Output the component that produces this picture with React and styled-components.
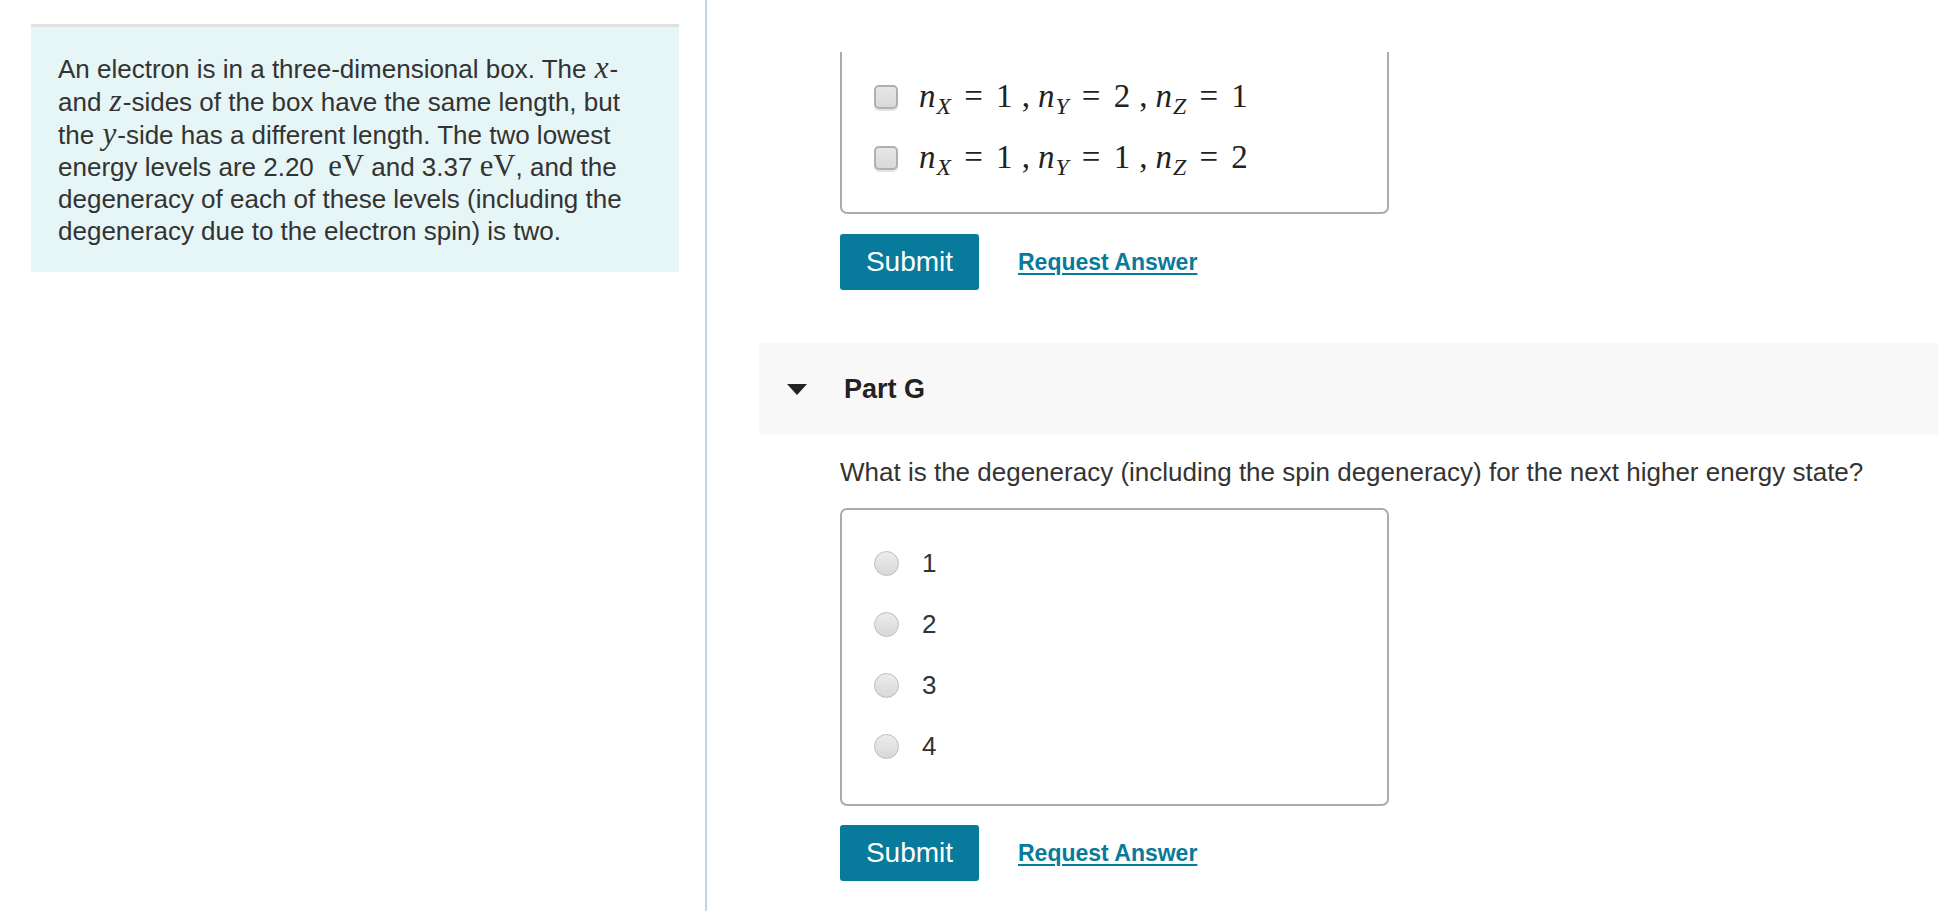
import React from 'react';
import styled, { createGlobalStyle } from 'styled-components';

const GlobalStyle = createGlobalStyle`
	html, body {
		margin: 0;
		padding: 0;
		background: #fff;
	}
	body {
		font-family: "Liberation Sans", Arial, sans-serif;
		color: #333;
	}
`;

const Page = styled.div`
	display: flex;
	height: 100vh;
	overflow: hidden;
`;

const LeftPane = styled.div`
	box-sizing: border-box;
	width: 707px;
	flex-shrink: 0;
	padding: 24px 26px 0 31px;
	border-right: 2px solid #c7d5e0;
`;

const IntroBox = styled.div`
	background: #e6f5f6;
	border-top: 3px solid #e1e1e1;
	padding: 25px 22px 25px 27px;
	font-size: 26px;
	line-height: 32px;
	color: #333;
`;

const MathVar = styled.span`
	font-family: "Liberation Serif", "Times New Roman", serif;
	font-style: italic;
	font-size: 1.2em;
	line-height: 1;
	margin: 0 1px;
`;

const MathRoman = styled.span`
	font-family: "Liberation Serif", "Times New Roman", serif;
	font-size: 1.18em;
	line-height: 1;
`;

const RightPane = styled.div`
	flex: 1;
	padding-top: 52px;
	overflow: hidden;
`;

const Section = styled.div`
	margin-left: 133px;
	width: 549px;
`;

const ChoiceBox = styled.div`
	box-sizing: border-box;
	width: 549px;
	border: 2px solid #ababab;
	border-top: ${({ cut }) => (cut ? 'none' : '2px solid #ababab')};
	border-radius: ${({ cut }) => (cut ? '0 0 7px 7px' : '7px')};
	padding: ${({ cut }) => (cut ? '14px 0 24px 32px' : '23px 0 27px 32px')};
`;

const ChoiceRow = styled.label`
	display: flex;
	align-items: center;
	height: 61px;
	gap: ${({ gap }) => gap || 22}px;
	cursor: pointer;
`;

const CheckMark = styled.span`
	box-sizing: border-box;
	width: 24px;
	height: 24px;
	border-radius: 5px;
	border: 2px solid #b0b0b0;
	background: linear-gradient(#e6e6e6, #d9d9d9);
	box-shadow: 0 2px 0 #e4e4e4;
	flex-shrink: 0;
`;

const RadioMark = styled.span`
	box-sizing: border-box;
	width: 25px;
	height: 25px;
	border-radius: 50%;
	border: 1.5px solid #bdbdbd;
	background: linear-gradient(#ececec, #d8d8d8);
	flex-shrink: 0;
`;

const MathLine = styled.span`
	font-family: "Liberation Serif", "Times New Roman", serif;
	font-size: 33px;
	color: #222;
	display: inline-flex;
	align-items: baseline;
	white-space: nowrap;
`;

const N = styled.span`
	font-style: italic;
`;

const Sub = styled.span`
	font-style: italic;
	font-size: 0.72em;
	position: relative;
	top: 0.3em;
	margin-left: 1px;
`;

const Eq = styled.span`
	margin: 0 0.4em;
`;

const Comma = styled.span`
	margin: 0 0.24em 0 0.28em;
`;

const OptionText = styled.span`
	font-size: 26px;
	color: #333;
`;

const ActionRow = styled.div`
	display: flex;
	align-items: center;
	gap: 39px;
	margin-top: ${({ top }) => top}px;
`;

const SubmitButton = styled.button`
	width: 139px;
	height: 56px;
	border: none;
	border-radius: 3px;
	background: #087a9b;
	color: #fff;
	font-family: "Liberation Sans", Arial, sans-serif;
	font-size: 28px;
	cursor: pointer;
`;

const RequestLink = styled.a`
	font-size: 23px;
	font-weight: bold;
	color: #087a9b;
	text-decoration: underline;
	text-underline-offset: 3px;
	text-decoration-thickness: 2px;
	cursor: pointer;
`;

const PartHeader = styled.div`
	display: flex;
	align-items: center;
	margin: 53px 0 0 52px;
	height: 92px;
	padding-left: 28px;
	gap: 37px;
	background: #f8f8f8;
`;

const Caret = styled.span`
	width: 0;
	height: 0;
	border-left: 10.5px solid transparent;
	border-right: 10.5px solid transparent;
	border-top: 11px solid #222;
`;

const PartTitle = styled.h2`
	margin: 0;
	font-size: 27px;
	font-weight: bold;
	color: #222;
`;

const Question = styled.p`
	margin: 21px 0 20px 133px;
	font-size: 26px;
	line-height: 32px;
	color: #333;
	white-space: nowrap;
`;

const Mathnz = ({ x, y, z }) => (
	<MathLine>
		<N>n</N><Sub>X</Sub><Eq>=</Eq>{x}<Comma>,</Comma>
		<N>n</N><Sub>Y</Sub><Eq>=</Eq>{y}<Comma>,</Comma>
		<N>n</N><Sub>Z</Sub><Eq>=</Eq>{z}
	</MathLine>
);

const App = () => {
	const states = [
		{ x: 1, y: 2, z: 1 },
		{ x: 1, y: 1, z: 2 }
	];
	const degeneracies = ['1', '2', '3', '4'];

	return (
		<>
			<GlobalStyle />
			<Page>
				<LeftPane>
					<IntroBox>
						An electron is in a three-dimensional box. The <MathVar>x</MathVar>-
						and <MathVar>z</MathVar>-sides of the box have the same length, but
						the <MathVar>y</MathVar>-side has a different length. The two lowest
						energy levels are 2.20 &nbsp;<MathRoman>eV</MathRoman> and 3.37 <MathRoman>eV</MathRoman>, and the
						degeneracy of each of these levels (including the degeneracy due to
						the electron spin) is two.
					</IntroBox>
				</LeftPane>

				<RightPane>
					<Section>
						<ChoiceBox cut>
							{states.map((s, i) => (
								<ChoiceRow key={i} gap={21}>
									<CheckMark />
									<Mathnz {...s} />
								</ChoiceRow>
							))}
						</ChoiceBox>
						<ActionRow top={20}>
							<SubmitButton>Submit</SubmitButton>
							<RequestLink>Request Answer</RequestLink>
						</ActionRow>
					</Section>

					<PartHeader>
						<Caret />
						<PartTitle>Part G</PartTitle>
					</PartHeader>

					<Question>
						What is the degeneracy (including the spin degeneracy) for the next higher energy state?
					</Question>

					<Section>
						<ChoiceBox>
							{degeneracies.map((d) => (
								<ChoiceRow key={d} gap={23}>
									<RadioMark />
									<OptionText>{d}</OptionText>
								</ChoiceRow>
							))}
						</ChoiceBox>
						<ActionRow top={19}>
							<SubmitButton>Submit</SubmitButton>
							<RequestLink>Request Answer</RequestLink>
						</ActionRow>
					</Section>
				</RightPane>
			</Page>
		</>
	);
};

export default App;
